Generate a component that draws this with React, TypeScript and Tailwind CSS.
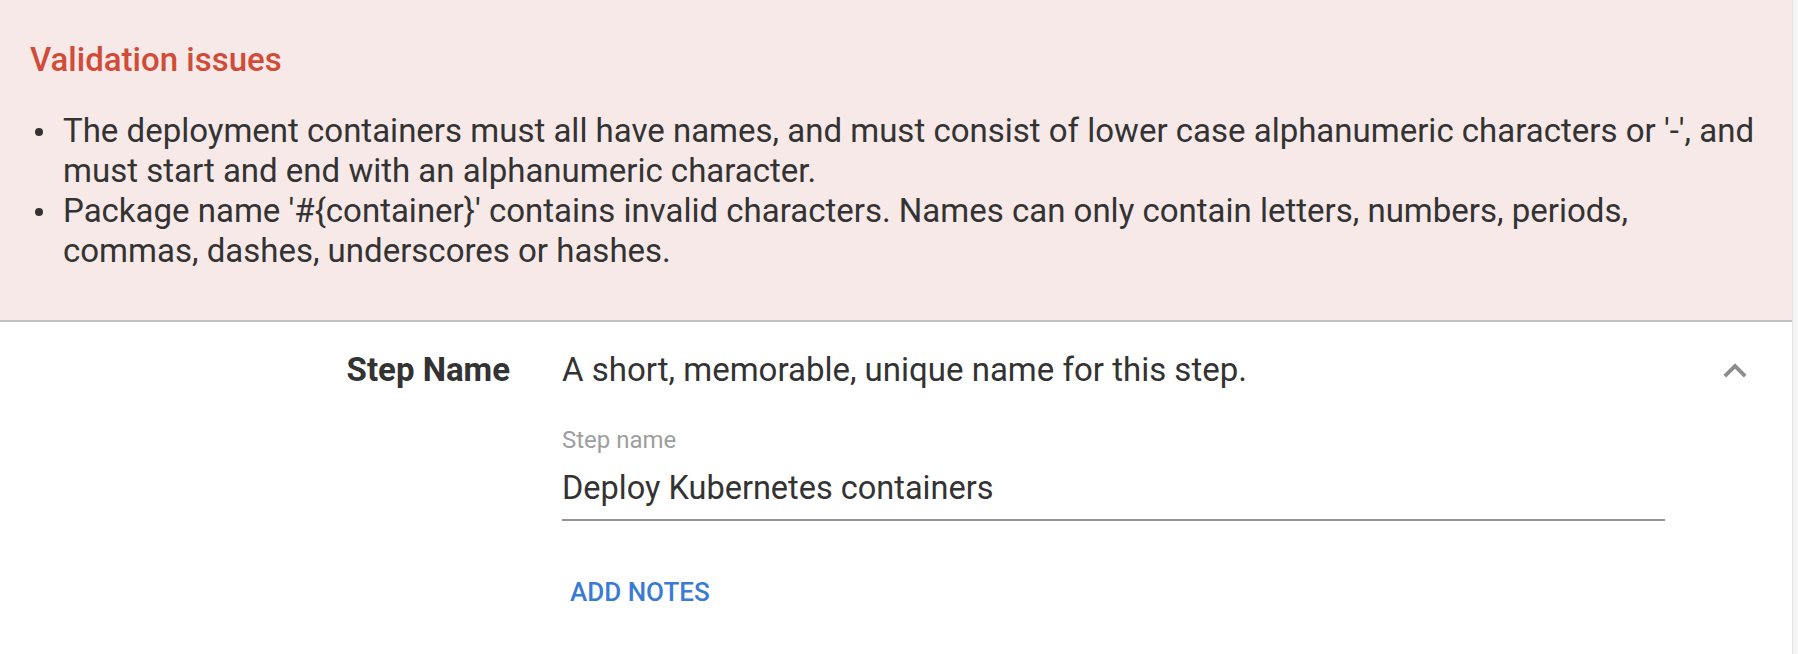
import React from 'react';

const issues: string[][] = [
  [
    "The deployment containers must all have names, and must consist of lower case alphanumeric characters or '-', and",
    'must start and end with an alphanumeric character.',
  ],
  [
    "Package name '#{container}' contains invalid characters. Names can only contain letters, numbers, periods,",
    'commas, dashes, underscores or hashes.',
  ],
];

const ExpandLess: React.FC<{ className?: string }> = ({ className = '' }) => (
  <svg viewBox="0 0 24 24" className={className} fill="currentColor">
    <path d="M12 8l-6 6 1.41 1.41L12 10.83l4.59 4.58L18 14z" />
  </svg>
);

export default function App() {
  return (
    <div className="flex min-h-[654px] bg-white font-['Roboto','Liberation_Sans',sans-serif] text-[#333333]">
      <div className="w-[1792px] shrink-0">
        {/* validation summary */}
        <div className="bg-[#f6e9e7] pl-[30px] pt-[40px] pb-[49px] border-b-2 border-[#c4c1c0]">
          <h2 className="text-[33px] leading-[40px] font-medium text-[#d14c38]">Validation issues</h2>
          <ul className="mt-[31px]">
            {issues.map((lines, i) => (
              <li key={i} className="flex">
                <span className="w-[33px] shrink-0 pt-[17px] pl-[5px]">
                  <span className="block w-[8px] h-[8px] rounded-full bg-[#333333]" />
                </span>
                <span className="text-[33px] leading-[40px]">
                  {lines.map((l, j) => (
                    <span key={j} className="block whitespace-nowrap">
                      {l}
                    </span>
                  ))}
                </span>
              </li>
            ))}
          </ul>
        </div>

        {/* step name section */}
        <div className="flex pt-[28px]">
          <div className="w-[510px] shrink-0 text-right text-[33px] leading-[40px] font-bold whitespace-nowrap">Step Name</div>
          <div className="ml-[52px] flex-1">
            <div className="text-[33px] leading-[40px]">A short, memorable, unique name for this step.</div>
            <div className="mt-[36px] w-[1103px]">
              <label className="block text-[24px] leading-[28px] text-[#9e9e9e]">Step name</label>
              <div className="mt-[14px] pb-[11px] border-b-2 border-[#949494] text-[32.5px] leading-[40px]">
                Deploy Kubernetes containers
              </div>
            </div>
            <button className="mt-[56px] block text-[26px] leading-[30px] font-medium uppercase text-[#3a7bd5] pl-[8px]">
              Add notes
            </button>
          </div>
          <div className="w-[46px] mr-[34px] shrink-0 -mt-[2px] text-[#8d8d8d]">
            <ExpandLess className="w-[46px] h-[46px]" />
          </div>
        </div>
      </div>
      <div className="flex-1 bg-[#f4f4f4] border-l border-[#e2e2e2]" />
    </div>
  );
}
